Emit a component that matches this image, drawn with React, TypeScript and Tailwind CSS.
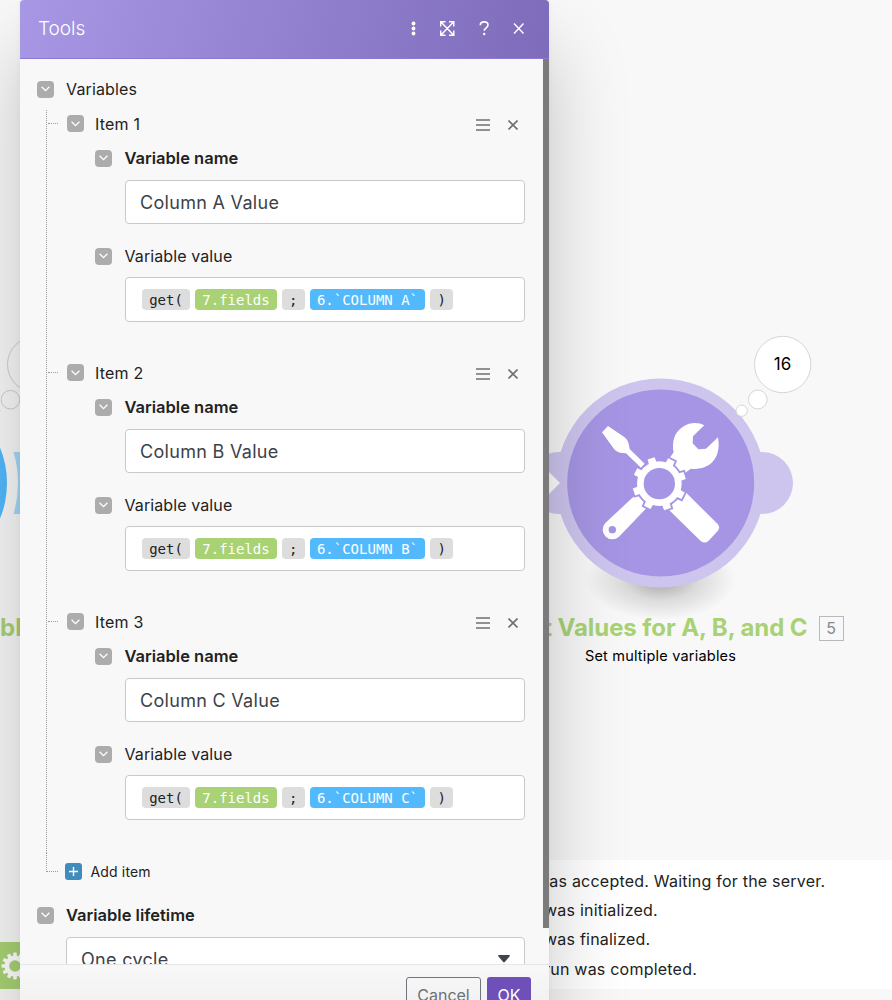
import type { ReactNode } from 'react';
import clsx from 'clsx';

const ITEMS = [
  { id: 1, name: 'Column A Value', column: 'COLUMN A' },
  { id: 2, name: 'Column B Value', column: 'COLUMN B' },
  { id: 3, name: 'Column C Value', column: 'COLUMN C' },
];

const LOG_LINES = [
  { text: 'was accepted. Waiting for the server.', indent: 'pl-[436px]' },
  { text: 'was initialized.', indent: 'pl-[444px]' },
  { text: 'was finalized.', indent: 'pl-[444px]' },
  { text: 'run was completed.', indent: 'pl-[444px]' },
];

const CHIP_TONE = {
  fn: 'bg-[#dddddd] text-[#222222]',
  green: 'bg-[#a9d275] text-white',
  blue: 'bg-[#53b9fd] text-white',
} as const;

/** Teeth of the gear in the middle of the tools icon, in degrees. */
const GEAR_TEETH = [-108, -63, -18, 27, 72, 117, 162, 207];
const SMALL_TEETH = [0, 30, 60, 90, 120, 150, 180, 210, 240, 270, 300, 330];

function Toggle() {
  return (
    <span className="flex h-[17px] w-[17px] shrink-0 items-center justify-center rounded-[4px] bg-[#acacac]">
      <svg width="9" height="6" viewBox="0 0 9 6" fill="none" stroke="#fff" strokeWidth="1.3">
        <path d="M0.6 0.7 4.5 4.6 8.4 0.7" />
      </svg>
    </span>
  );
}

function Chip({ tone, children }: { tone: keyof typeof CHIP_TONE; children: ReactNode }) {
  return (
    <span
      className={clsx(
        "flex h-[21px] items-center rounded-[4px] px-[7.200px] font-['DejaVu_Sans_Mono',monospace] text-[14px] leading-none whitespace-pre",
        CHIP_TONE[tone],
      )}
    >
      {children}
    </span>
  );
}

function FieldLabel({ bold, children }: { bold?: boolean; children: ReactNode }) {
  return (
    <div className="flex h-[34px] items-center gap-[12.500px] pl-[48px]">
      <Toggle />
      <span className={clsx(bold ? 'text-[16.500px] font-semibold' : 'text-[16px] tracking-[0.100px]')}>
        {children}
      </span>
    </div>
  );
}

function VariableItem({ id, name, column }: { id: number; name: string; column: string }) {
  return (
    <div className="h-[249px]">
      <div className="flex h-[35px] items-center">
        <span className="ml-px w-[10px] border-t border-dotted border-[#999]" />
        <span className="ml-[9px]">
          <Toggle />
        </span>
        <span className="ml-[11px] flex-1 text-[16px] tracking-[0.200px]">Item {id}</span>
        <svg className="mt-[2px] mr-[18px]" width="14" height="12" viewBox="0 0 14 12" stroke="#6f6f6f" strokeWidth="1.600">
          <path d="M0 1h14M0 6h14M0 11h14" />
        </svg>
        <svg className="mt-[2px] mr-[7px]" width="10" height="10" viewBox="0 0 10 10" stroke="#6f6f6f" strokeWidth="1.600">
          <path d="M0.5 0.5 9.5 9.5M9.5 0.5 0.5 9.5" />
        </svg>
      </div>
      <FieldLabel bold>Variable name</FieldLabel>
      <div className="mt-[5px] ml-[78px] flex h-[44px] items-center rounded-[4px] border border-[#c9c9c9] bg-white px-[14px] text-[18px] tracking-[0.300px] text-[#3c4248]">
        {name}
      </div>
      <div className="mt-[15px]">
        <FieldLabel>Variable value</FieldLabel>
      </div>
      <div className="mt-[4px] ml-[78px] flex h-[45px] items-center gap-[5px] rounded-[4px] border border-[#c9c9c9] bg-white px-[16px]">
        <Chip tone="fn">get(</Chip>
        <Chip tone="green">7.fields</Chip>
        <Chip tone="fn">;</Chip>
        <Chip tone="blue">{`6.\`${column}\``}</Chip>
        <Chip tone="fn">)</Chip>
      </div>
    </div>
  );
}

function ToolsIcon() {
  const gear = (
    <>
      <circle cx="343" cy="491" r="67" />
      {GEAR_TEETH.map((a) => (
        <path key={a} d="M400 479 L423 480 L423 502 L400 503Z" transform={`rotate(${a} 343 491)`} />
      ))}
    </>
  );

  return (
    <g transform="translate(545 320) scale(0.33333)" fill="#fff">
      <path d="M171 337 L189 318 L238 351 Q249 359 251 371 L254 387 L299 431 L288 443 L243 400 L225 398 Q213 396 207 387 Z" />
      <path d="M478 316 Q460 306 432 311 Q386 328 384 374 Q383 386 386 397 L376 411 L360 455 L395 480 L428 453 L438 446 Q470 450 496 432 Q528 405 519 352 L483 386 L460 388 L443 370 L444 349 Z" />
      <path d="M365 470 L340 538 L376 574 L467 663 Q479 673 491 662 L518 633 Q527 622 518 612 L425 520 Z" />
      <path d="M181 609 L275 521 L320 548 L222 650 A29 29 0 0 1 181 609Z" />
      <circle cx="202" cy="629" r="11" fill="#a695e4" />
      <g fill="#a695e4" stroke="#a695e4" strokeWidth="11">
        {gear}
      </g>
      {gear}
      <circle cx="343" cy="491" r="47" fill="#a695e4" />
    </g>
  );
}

/** Scenario canvas behind the dialog. */
function Canvas() {
  return (
    <>
      <svg className="absolute inset-0" width="892" height="1000" viewBox="0 0 892 1000">
        <defs>
          <radialGradient id="drop">
            <stop offset="0" stopColor="#000" stopOpacity="0.34" />
            <stop offset="0.5" stopColor="#000" stopOpacity="0.12" />
            <stop offset="1" stopColor="#000" stopOpacity="0" />
          </radialGradient>
        </defs>
        <circle cx="-86.5" cy="483" r="93.5" fill="#52b9fd" />
        <path d="M13.5 452H24V514H13.5Q22.5 483 13.5 452Z" fill="#a5daf9" />
        <g fill="none" stroke="#cfcfcf">
          <circle cx="35.5" cy="364.5" r="28" />
          <circle cx="10.5" cy="399.7" r="9.3" />
          <circle cx="-6" cy="410.7" r="5.8" />
        </g>

        <ellipse cx="660.5" cy="580" rx="75" ry="40" fill="url(#drop)" />
        <g fill="#cec5ef">
          <circle cx="559" cy="483" r="31" />
          <circle cx="762" cy="483" r="31" />
          <circle cx="660.5" cy="483" r="104.6" />
        </g>
        <path d="M544 467 560 483 544 499Z" fill="#fff" />
        <circle cx="660.7" cy="483" r="93.5" fill="#a695e4" />
        <ToolsIcon />
        <g fill="#fff" stroke="#d6d6d6">
          <circle cx="782.7" cy="364.5" r="28.2" />
          <circle cx="757.8" cy="399.5" r="9.4" />
          <circle cx="741.7" cy="410.7" r="5.6" />
        </g>
      </svg>

      <span className="absolute top-[354px] left-[754px] w-[57px] text-center text-[17px] leading-[21px] text-black">16</span>
      <span className="absolute top-[613px] left-0 text-[24px] leading-[30px] font-bold text-[#a9d275]">bl</span>
      <div className="absolute top-[613px] right-[48.500px] flex items-center gap-[11px]">
        <span className="text-[24px] leading-[30px] font-bold tracking-[-0.080px] whitespace-nowrap text-[#a9d275]">
          Set Values for A, B, and C
        </span>
        <span className="flex h-[25px] w-[25px] items-center justify-center border border-[#b9b9b9] text-[16px] text-[#888]">
          5
        </span>
      </div>
      <span className="absolute top-[646px] left-[560px] w-[201px] text-center text-[14.500px] leading-[20px] tracking-[0.200px] text-black">
        Set multiple variables
      </span>

      <div className="absolute top-[860px] right-0 left-[100px] flex h-[129px] flex-col bg-white pt-[6.500px] text-[16px] tracking-[0.220px] text-[#222]">
        {LOG_LINES.map((line) => (
          <p key={line.text} className={clsx('h-[29.400px] leading-[29.400px] whitespace-nowrap', line.indent)}>
            {line.text}
          </p>
        ))}
      </div>
      <svg className="absolute top-[942px] left-0 bg-[#a9d275]" width="30" height="47" viewBox="0 0 30 47" fill="#fff">
        <circle cx="15" cy="24" r="10.5" />
        {SMALL_TEETH.map((a) => (
          <rect key={a} x="13.2" y="10.5" width="3.6" height="5" rx="1" transform={`rotate(${a} 15 24)`} />
        ))}
        <circle cx="15" cy="24" r="5.8" fill="#a9d275" />
      </svg>
    </>
  );
}

function DialogHeader() {
  return (
    <header className="flex h-[59px] shrink-0 items-center border-b border-[#8d79d2] bg-[linear-gradient(105deg,#a797e5_0%,#7e6cba_100%)] pl-[18px] text-white">
      <h1 className="flex-1 text-[19px] font-light">Tools</h1>
      <svg width="119" height="20" viewBox="408 19 119 20" className="mr-[22px]" fill="none" stroke="#fff" strokeWidth="1.4">
        <g fill="#fff" stroke="none">
          <circle cx="413.5" cy="23.5" r="1.9" />
          <circle cx="413.5" cy="28.5" r="1.9" />
          <circle cx="413.5" cy="33.5" r="1.9" />
        </g>
        <path d="M441 22 453.500 35M453.500 22 441 35M440.700 26.500V21.700H445.500M449 21.700H453.800V26.500M453.800 30.500V35.300H449M445.500 35.300H440.700V30.500" />
        <path d="M480.300 25.200C480.300 22.900 482 21.900 484.100 21.900C486.300 21.900 488 23.100 488 25.100C488 27.900 484.200 27.700 484.200 30.800" strokeWidth="1.6" />
        <circle cx="484.2" cy="34" r="1.2" fill="#fff" stroke="none" />
        <path d="M514 23.500 523.500 33.500M523.500 23.500 514 33.500" />
      </svg>
    </header>
  );
}

export default function App() {
  return (
    <div className="relative h-[1000px] w-[892px] overflow-hidden bg-[#f8f8f8] font-['Inter',sans-serif] text-[#222]">
      <Canvas />

      <section className="absolute top-0 left-[20px] flex h-[1060px] w-[529px] flex-col overflow-hidden rounded-t-[4px] bg-[#f8f8f8] shadow-[0_50px_80px_rgba(0,0,0,0.22),0_0_5px_rgba(0,0,0,0.05)]">
        <DialogHeader />

        <div className="flex h-[905px] shrink-0 overflow-hidden">
          <div className="w-[505px] shrink-0 pt-[13px] pl-[17px]">
            <div className="flex h-[34px] items-center gap-[12px]">
              <Toggle />
              <span className="text-[16px] tracking-[0.150px]">Variables</span>
            </div>

            {/* Tree of items, joined by a dotted guide line */}
            <div className="mt-[4px] ml-[9px] flow-root h-[743px] border-l border-dotted border-[#999]">
              <div className="-mt-[4px]">
                {ITEMS.map((item) => (
                  <VariableItem key={item.id} {...item} />
                ))}
              </div>
            </div>
            <div className="ml-[9px] flex h-[36px]">
              <span className="h-[19px] w-[12px] border-b border-l border-dotted border-[#999]" />
              <span className="ml-[6.500px] flex items-center gap-[9px] text-[14px] tracking-[0.150px]">
                <span className="flex h-[17px] w-[17px] items-center justify-center rounded-[3px] bg-[#428bbd]">
                  <svg width="9" height="9" viewBox="0 0 9 9" stroke="#fff" strokeWidth="1.4">
                    <path d="M4.5 0V9M0 4.5H9" />
                  </svg>
                </span>
                Add item
              </span>
            </div>

            <div className="mt-[9px] flex h-[34px] items-center gap-[12px]">
              <Toggle />
              <span className="text-[16.500px] font-semibold">Variable lifetime</span>
            </div>
            <div className="mt-[5px] ml-[29px] flex h-[44px] items-center justify-between rounded-[4px] border border-[#c9c9c9] bg-white px-[14px] text-[18px] tracking-[0.300px] text-[#3c4248]">
              One cycle
              <svg width="12" height="8" viewBox="0 0 12 8" fill="#3f454b">
                <path d="M1 0H11Q12.500 0.400 11.500 1.600L6.800 7Q6 7.700 5.200 7L0.500 1.600Q-0.500 0.400 1 0Z" />
              </svg>
            </div>
          </div>
          <div className="ml-auto h-[869px] w-[6px] bg-[#7b7b7b]" />
        </div>

        <footer className="flex flex-1 items-start justify-end gap-[6px] border-t border-[#e6e6e6] bg-[linear-gradient(#f8f8f8,#f1f1f1_40px)] pt-[12px] pr-[18px] text-[16px]">
          <button className="h-[36px] w-[75px] rounded-[3px] border border-[#6f767d] text-[#6b7278]">Cancel</button>
          <button className="h-[36px] w-[44px] rounded-[3px] bg-[#6e50b8] text-white">OK</button>
        </footer>
      </section>
    </div>
  );
}
